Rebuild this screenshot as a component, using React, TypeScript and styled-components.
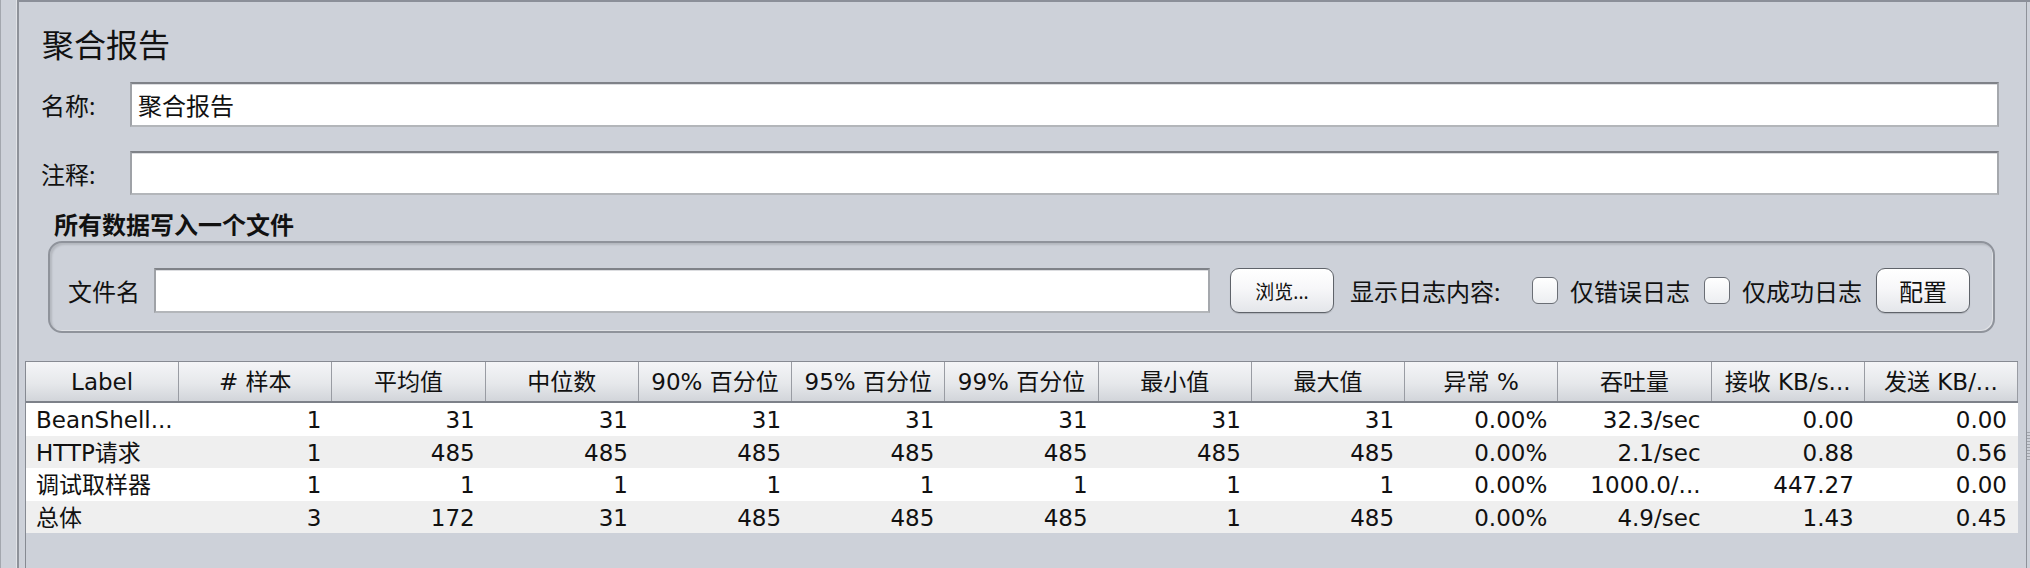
import styled, { createGlobalStyle } from "styled-components";

const GlobalStyle = createGlobalStyle`
  html, body {
    margin: 0;
    padding: 0;
    overflow: hidden;
    background: #cdd1d9;
  }
  * {
    box-sizing: border-box;
  }
`;

const FONT = `"Noto Sans", "Noto Sans CJK SC", sans-serif`;
const TABLE_FONT = `"DejaVu Sans", "Noto Sans CJK SC", sans-serif`;

interface IReportRow {
    label: string,
    values: string[],
}

const columns = [
    'Label', '# 样本', '平均值', '中位数', '90% 百分位', '95% 百分位', '99% 百分位',
    '最小值', '最大值', '异常 %', '吞吐量', '接收 KB/s...', '发送 KB/...',
];

const rows: IReportRow[] = [
    {label: 'BeanShell...', values: ['1', '31', '31', '31', '31', '31', '31', '31', '0.00%', '32.3/sec', '0.00', '0.00']},
    {label: 'HTTP请求', values: ['1', '485', '485', '485', '485', '485', '485', '485', '0.00%', '2.1/sec', '0.88', '0.56']},
    {label: '调试取样器', values: ['1', '1', '1', '1', '1', '1', '1', '1', '0.00%', '1000.0/...', '447.27', '0.00']},
    {label: '总体', values: ['3', '172', '31', '485', '485', '485', '1', '485', '0.00%', '4.9/sec', '1.43', '0.45']},
];

export default function App() {
    return (
        <>
            <GlobalStyle/>
            <Screen>
                <LeftStrip/>
                <Panel>
                    <Title>聚合报告</Title>
                    <FieldRow>
                        <FieldLabel>名称:</FieldLabel>
                        <TextBox height={45}>聚合报告</TextBox>
                    </FieldRow>
                    <FieldRow top={24}>
                        <FieldLabel>注释:</FieldLabel>
                        <TextBox height={44}/>
                    </FieldRow>

                    <GroupTitle>所有数据写入一个文件</GroupTitle>
                    <GroupBox>
                        <FileLabel>文件名</FileLabel>
                        <FileInput/>
                        <AquaButton width={104} small>浏览...</AquaButton>
                        <LogLabel>显示日志内容:</LogLabel>
                        <CheckBox/>
                        <CheckText>仅错误日志</CheckText>
                        <CheckBox/>
                        <CheckText>仅成功日志</CheckText>
                        <AquaButton width={94}>配置</AquaButton>
                    </GroupBox>

                    <TableFrame>
                        <HeaderRow>
                            {columns.map((col) =>
                                <HeaderCell key={col}>{col}</HeaderCell>
                            )}
                        </HeaderRow>
                        {rows.map((row, index) =>
                            <DataRow key={row.label} striped={index % 2 === 1}>
                                <Cell>{row.label}</Cell>
                                {row.values.map((v, i) =>
                                    <Cell key={i} right>{v}</Cell>
                                )}
                            </DataRow>
                        )}
                    </TableFrame>
                </Panel>
                <RightEdge>
                    <Grip/>
                </RightEdge>
            </Screen>
        </>
    );
}

const Screen = styled.div`
  display: flex;
  width: 2030px;
  height: 568px;
  background: #cdd1d9;
  font-family: ${FONT};
  color: #111;
  overflow: hidden;
`;

const LeftStrip = styled.div`
  width: 19px;
  flex-shrink: 0;
  border-left: 1px solid #a3a7ae;
  border-right: 2px solid #8e929a;
  box-shadow: inset -1px 0 0 #e1e3e7;
`;

const Panel = styled.div`
  flex: 1;
  display: flex;
  flex-direction: column;
  border-top: 2px solid #8b8f99;
  min-width: 0;
`;

const RightEdge = styled.div`
  width: 4px;
  flex-shrink: 0;
  border-left: 1px solid #8e929a;
  border-top: 2px solid #8b8f99;
  display: flex;
  flex-direction: column;
`;

const Grip = styled.div`
  margin-top: 430px;
  height: 28px;
  background: repeating-linear-gradient(#a0a4ab 0 1px, transparent 1px 3px);
`;

const Title = styled.div`
  margin: 24px 0 0 23px;
  font-size: 32px;
  line-height: 37px;
`;

const FieldRow = styled.div<{top?: number}>`
  display: flex;
  align-items: center;
  margin-top: ${(p) => p.top ?? 19}px;
  padding-left: 22px;
  padding-right: 27px;
`;

const FieldLabel = styled.div`
  width: 89px;
  flex-shrink: 0;
  font-size: 24px;
`;

const TextBox = styled.div<{height: number}>`
  flex: 1;
  height: ${(p) => p.height}px;
  background: #fff;
  border: 2px solid;
  border-color: #7f8288 #a5a8ad #b3b6ba #9fa2a7;
  box-shadow: inset 0 1px 0 #dcdde0;
  padding-left: 6px;
  display: flex;
  align-items: center;
  font-size: 24px;
`;

const GroupTitle = styled.div`
  margin: 16px 0 0 35px;
  font-size: 24px;
  font-weight: bold;
  line-height: 28px;
`;

const GroupBox = styled.div`
  margin: 2px 31px 0 29px;
  height: 92px;
  border: 2px solid #8f939b;
  border-radius: 14px;
  box-shadow: inset 2px 2px 2px rgba(0, 0, 0, 0.12), inset -1px -1px 0 #dfe1e5;
  display: flex;
  align-items: center;
  padding: 7px 23px 0 18px;
`;

const FileLabel = styled.div`
  width: 70px;
  flex-shrink: 0;
  font-size: 24px;
  margin-right: 16px;
  white-space: nowrap;
`;

const FileInput = styled.div`
  flex: 1;
  height: 45px;
  background: #fff;
  border: 2px solid;
  border-color: #7f8288 #a5a8ad #b3b6ba #9fa2a7;
  box-shadow: inset 0 1px 0 #dcdde0;
  margin-right: 20px;
`;

const AquaButton = styled.div<{width: number, small?: boolean}>`
  width: ${(p) => p.width}px;
  height: 45px;
  flex-shrink: 0;
  border: 1.5px solid #5f636a;
  border-radius: 9px;
  background: linear-gradient(#ffffff 0%, #f7f7f9 45%, #e4e6ea 100%);
  box-shadow: 0 1px 1px rgba(0, 0, 0, 0.15);
  display: flex;
  align-items: center;
  justify-content: center;
  font-size: ${(p) => p.small ? 19 : 24}px;
`;

const LogLabel = styled.div`
  width: 150px;
  flex-shrink: 0;
  font-size: 24px;
  margin: 0 32px 0 16px;
  white-space: nowrap;
`;

const CheckBox = styled.div`
  width: 26px;
  height: 27px;
  flex-shrink: 0;
  border: 1.5px solid #6a6e75;
  border-radius: 6px;
  background: linear-gradient(#ffffff, #eceef1);
  margin-right: 12px;
`;

const CheckText = styled.div`
  width: 120px;
  flex-shrink: 0;
  font-size: 24px;
  margin-right: 14px;
  white-space: nowrap;
`;

const TableFrame = styled.div`
  flex: 1;
  margin: 28px 8px 0 6px;
  border-left: 1px solid #868a92;
  border-top: 1px solid #868a92;
  font-family: ${TABLE_FONT};
`;

const HeaderRow = styled.div`
  display: grid;
  grid-template-columns: repeat(13, 1fr);
  height: 41px;
  border-bottom: 2px solid #7d8189;
  background: linear-gradient(#f4f5f7 0%, #e6e8eb 55%, #d2d5da 100%);
`;

const HeaderCell = styled.div`
  display: flex;
  align-items: center;
  justify-content: center;
  border-right: 1px solid #999ca3;
  font-size: 23px;
  line-height: 28px;
  white-space: nowrap;
  overflow: hidden;
`;

const DataRow = styled.div<{striped: boolean}>`
  display: grid;
  grid-template-columns: repeat(13, 1fr);
  height: 32.5px;
  background: ${(p) => p.striped ? '#efefef' : '#ffffff'};
`;

const Cell = styled.div<{right?: boolean}>`
  display: flex;
  align-items: center;
  justify-content: ${(p) => p.right ? 'flex-end' : 'flex-start'};
  padding: 2px 11px 0 10px;
  font-size: 23px;
  line-height: 28px;
  white-space: nowrap;
  overflow: hidden;
`;
